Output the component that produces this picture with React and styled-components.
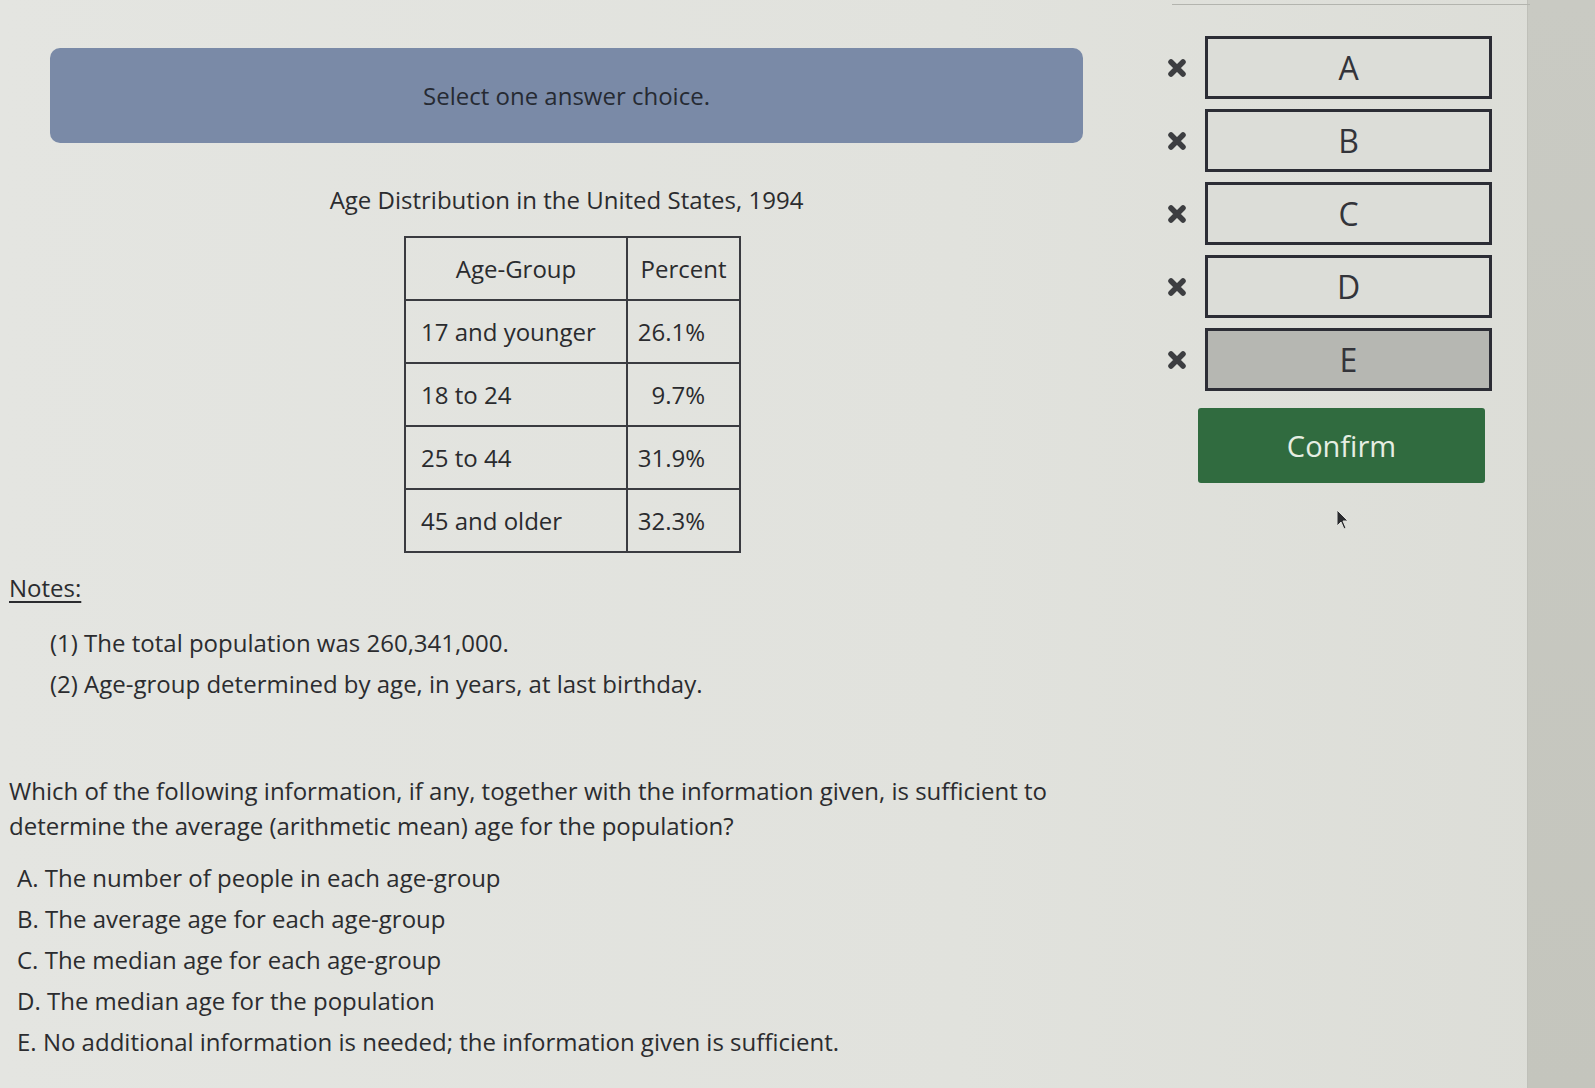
import React from "react";
import styled, { createGlobalStyle } from "styled-components";

const Global = createGlobalStyle`
  html, body { margin: 0; padding: 0; }
  body {
    background: #e1e2dd;
    font-family: "Open Sans", "Noto Sans", "Liberation Sans", sans-serif;
    color: #2b2c2f;
  }
`;

const Page = styled.div`
  display: flex;
  width: 1595px;
  height: 1088px;
  overflow: hidden;
  background: linear-gradient(90deg, #e4e5e1 0%, #e1e2dd 60%, #dcddd7 100%);
`;

const Main = styled.div`
  width: 1074px;
  flex: none;
  padding: 48px 0 0 9px;
  display: flex;
  flex-direction: column;
  align-items: flex-start;
`;

const Banner = styled.div`
  align-self: stretch;
  margin-left: 41px;
  height: 95px;
  background: #7a8aa7;
  border-radius: 10px;
  display: flex;
  align-items: center;
  justify-content: center;
  font-size: 24px;
  color: #262a33;
`;

const Title = styled.div`
  align-self: stretch;
  margin: 41px 0 0 41px;
  text-align: center;
  font-size: 24px;
  line-height: 32px;
`;

const Table = styled.table`
  margin: 20px 0 0 395px;
  border-collapse: collapse;
  font-size: 24px;
  color: #2a2b2e;
`;

const Th = styled.th`
  border: 2px solid #3a3b40;
  height: 61px;
  font-weight: 400;
  text-align: center;
  width: ${(p) => p.$w}px;
  padding: 0;
`;

const Td = styled.td`
  border: 2px solid #3a3b40;
  height: 61px;
  padding: 0 ${(p) => (p.$right ? 34 : 0)}px 0 ${(p) => (p.$right ? 0 : 15)}px;
  text-align: ${(p) => (p.$right ? "right" : "left")};
`;

const Notes = styled.div`
  margin-top: 19px;
  font-size: 24px;
  line-height: 32px;
  text-decoration: underline;
  text-underline-offset: 4px;
`;

const NoteList = styled.div`
  margin: 18px 0 0 41px;
  font-size: 24px;
  line-height: 41px;
`;

const Question = styled.div`
  margin-top: 69px;
  font-size: 24px;
  line-height: 35px;
  white-space: nowrap;
`;

const Options = styled.div`
  margin: 14px 0 0 8px;
  font-size: 24px;
  line-height: 41px;
`;

const Side = styled.div`
  margin-left: 81px;
  width: 330px;
  flex: none;
  padding-top: 36px;
  display: flex;
  flex-direction: column;
  gap: 10px;
  position: relative;
`;

const TopLine = styled.div`
  position: absolute;
  top: 4px;
  left: 8px;
  right: -36px;
  height: 1px;
  background: #b3b4ae;
`;

const ChoiceRow = styled.div`
  display: flex;
  align-items: center;
  gap: 16px;
`;

const XMark = styled.svg`
  width: 24px;
  height: 24px;
  flex: none;
  margin-left: 1px;
`;

const ChoiceBox = styled.div`
  width: 281px;
  height: 57px;
  border: 3px solid #2c2d35;
  background: ${(p) => (p.$selected ? "#b6b7b2" : "#dcddd8")};
  display: flex;
  align-items: center;
  justify-content: center;
  font-size: 32px;
  color: #33343a;
`;

const Confirm = styled.button`
  margin: 7px 0 0 34px;
  width: 287px;
  height: 75px;
  border: none;
  border-radius: 3px;
  background: #306b3f;
  color: #e6eee3;
  font-family: inherit;
  font-size: 29px;
  cursor: pointer;
`;

const Cursor = styled.svg`
  margin: 16px 0 0 172px;
  width: 14px;
  height: 22px;
`;

const Strip = styled.div`
  margin-left: auto;
  width: 67px;
  height: 100%;
  background: linear-gradient(180deg, #c9cac3 0%, #c4c5bd 100%);
  border-left: 1px solid #bfc0b9;
`;

const X = () => (
  <XMark viewBox="0 0 24 24">
    <path d="M6 6 L18 18 M18 6 L6 18" stroke="#3d3e41" strokeWidth="5.5" strokeLinecap="round" />
  </XMark>
);

const rows = [
  ["17 and younger", "26.1%"],
  ["18 to 24", "9.7%"],
  ["25 to 44", "31.9%"],
  ["45 and older", "32.3%"],
];

const choices = ["A", "B", "C", "D", "E"];

export default function App() {
  return (
    <>
      <Global />
      <Page>
        <Main>
          <Banner>Select one answer choice.</Banner>
          <Title>Age Distribution in the United States, 1994</Title>
          <Table>
            <thead>
              <tr>
                <Th $w={220}>Age-Group</Th>
                <Th $w={111}>Percent</Th>
              </tr>
            </thead>
            <tbody>
              {rows.map(([a, b]) => (
                <tr key={a}>
                  <Td>{a}</Td>
                  <Td $right>{b}</Td>
                </tr>
              ))}
            </tbody>
          </Table>
          <Notes>Notes:</Notes>
          <NoteList>
            <div>(1) The total population was 260,341,000.</div>
            <div>(2) Age-group determined by age, in years, at last birthday.</div>
          </NoteList>
          <Question>
            Which of the following information, if any, together with the information given, is sufficient to
            <br />
            determine the average (arithmetic mean) age for the population?
          </Question>
          <Options>
            <div>A. The number of people in each age-group</div>
            <div>B. The average age for each age-group</div>
            <div>C. The median age for each age-group</div>
            <div>D. The median age for the population</div>
            <div>E. No additional information is needed; the information given is sufficient.</div>
          </Options>
        </Main>
        <Side>
          <TopLine />
          {choices.map((c) => (
            <ChoiceRow key={c}>
              <X />
              <ChoiceBox $selected={c === "E"}>{c}</ChoiceBox>
            </ChoiceRow>
          ))}
          <Confirm>Confirm</Confirm>
          <Cursor viewBox="0 0 14 22">
            <path d="M1 1 L1 17 L5 13 L8 20 L10 19 L7 12 L12 12 Z" fill="#2a2b2e" stroke="#e1e2dd" strokeWidth="1" />
          </Cursor>
        </Side>
        <Strip />
      </Page>
    </>
  );
}
